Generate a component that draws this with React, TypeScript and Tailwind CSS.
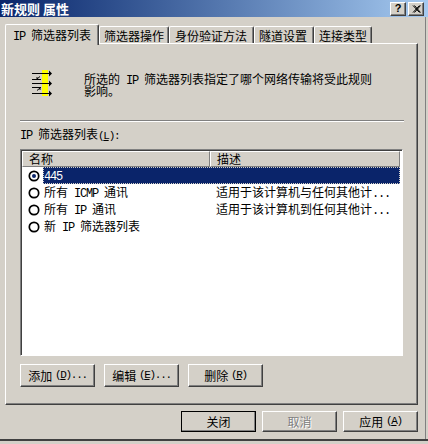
const cjk = "font-['Noto_Sans_CJK_SC',sans-serif] text-[12px] leading-[13px] text-black";
const asc = "font-['Liberation_Mono',monospace] text-[12px] tracking-[-1.2px]";
const small = "font-['Liberation_Mono',monospace] text-[11px] tracking-[-1.3px]";

function A({ children }: { children: string }) {
  return <span className={`${asc} whitespace-pre`}>{children}</span>;
}

function Key({ k, dots, label }: { k: string; dots?: boolean; label?: boolean }) {
  return (
    <span className={`${small} whitespace-pre`}>
      {"("}
      <span className="underline">{k}</span>
      {")"}
      {dots ? "..." : ""}
      {label ? ":" : ""}
    </span>
  );
}

function Tab({ children, active, w }: { children: React.ReactNode; active?: boolean; w: string }) {
  return active ? (
    <div className={`${w} h-[21px] border-t border-l border-white border-r border-r-[#404040] rounded-t-[2px] pl-[7px] pt-[3px] whitespace-nowrap shadow-[inset_-1px_0_0_#808080] bg-[#d4d0c8] z-10 -mb-px`}>
      {children}
    </div>
  ) : (
    <div className={`${w} h-[18px] mt-[2px] border-t border-l border-white border-r border-r-[#404040] rounded-t-[2px] pl-[4px] pt-[2px] whitespace-nowrap shadow-[inset_-1px_0_0_#808080]`}>
      {children}
    </div>
  );
}

function Btn({ children, w, h, def, off }: { children: React.ReactNode; w: string; h: string; def?: boolean; off?: boolean }) {
  return (
    <div className={`${w} ${h} ${def ? "outline outline-1 outline-black -outline-offset-1" : ""} border border-t-white border-l-white border-r-[#404040] border-b-[#404040] shadow-[inset_-1px_-1px_0_#808080] flex items-center justify-center whitespace-pre ${off ? "text-[#808080] [text-shadow:1px_1px_0_#fff]" : ""}`}>
      {children}
    </div>
  );
}

function Radio({ on }: { on?: boolean }) {
  return (
    <svg width="12" height="12" viewBox="0 0 12 12" className="shrink-0">
      <circle cx="6" cy="6" r="4.7" fill="#fff" stroke="#000" strokeWidth="1.7" />
      {on && <circle cx="6" cy="6" r="2" fill="#0a246a" />}
    </svg>
  );
}

function Row({ name, desc, on }: { name: React.ReactNode; desc?: React.ReactNode; on?: boolean }) {
  return (
    <div className="flex h-[17px] items-center">
      <div className="w-[21px] flex pl-[6px]"><Radio on={on} /></div>
      {on ? (
        <div className="flex-1 h-[17px] bg-[#0a246a] text-white border border-dotted border-[#d4d0c8] leading-[14px]">{name}</div>
      ) : (
        <>
          <div className="w-[173px] pl-[1px] whitespace-pre">{name}</div>
          <div className="flex-1 whitespace-pre">{desc}</div>
        </>
      )}
    </div>
  );
}

function Icon() {
  return (
    <svg width="26" height="28" viewBox="0 0 26 28">
      <rect x="10" y="0" width="6" height="26" fill="#ffff00" />
      <g stroke="#000" fill="none">
        <path d="M0 3.5H17M0 13.5H17M0 23.5H17M0 9.5H9M0 17.5H9" />
        <path d="M8 6.5L5 9M5 7V9.5H8M5 20.5L8 18M8 20V17.5H5" strokeWidth="1" />
      </g>
      <path d="M17 0.5L20 3.5L17 6.5ZM17 10.5L20 13.5L17 16.5ZM17 20.5L20 23.5L17 26.5Z" fill="#000" />
    </svg>
  );
}

export default function App() {
  return (
    <div className={`w-[428px] h-[444px] bg-[#d4d0c8] overflow-hidden flex flex-col ${cjk}`}>
      <div className="h-[17px] shrink-0 bg-gradient-to-r from-[#0a246a] to-[#a6caf0] flex items-center justify-between">
        <span className="text-white font-bold text-[13px] pl-px whitespace-pre">新规则 属性</span>
        <div className="flex gap-[2px] pr-[4px]">
          <div className="w-[16px] h-[14px] bg-[#d4d0c8] border border-t-white border-l-white border-r-[#404040] border-b-[#404040] shadow-[inset_-1px_-1px_0_#808080] flex items-center justify-center font-['Liberation_Sans',sans-serif] font-bold text-[11px]">?</div>
          <div className="w-[16px] h-[14px] bg-[#d4d0c8] border border-t-white border-l-white border-r-[#404040] border-b-[#404040] shadow-[inset_-1px_-1px_0_#808080] flex items-center justify-center">
            <svg width="9" height="8" viewBox="0 0 9 8"><path d="M1 0.5L7.5 7.5M2.5 0.5L8.5 7.5M7.5 0.5L1 7.5M8.5 0.5L2.5 7.5" stroke="#000" fill="none" /></svg>
          </div>
        </div>
      </div>

      <div className="flex-1 min-h-0 w-[426px] border-r border-[#808080] flex flex-col">
        <div className="pl-[5px] pt-[7px] flex h-[26px] shrink-0 items-start">
          <Tab active w="w-[94px]"><A>IP </A>筛选器列表</Tab>
          <Tab w="w-[70px]">筛选器操作</Tab>
          <Tab w="w-[85px]"><span className="pl-[1px]">身份验证方法</span></Tab>
          <Tab w="w-[60px]">隧道设置</Tab>
          <Tab w="w-[58px]">连接类型</Tab>
        </div>

        <div className="ml-[5px] w-[413px] h-[362px] shrink-0 border border-t-white border-l-white border-r-[#404040] border-b-[#404040] shadow-[inset_-1px_-1px_0_#808080] px-[14px] flex flex-col">
          <div className="flex h-[77px] pt-[27px] shrink-0">
            <div className="w-[64px] pl-[12px] shrink-0 -mt-[1px]"><Icon /></div>
            <div className="whitespace-pre pt-px">
              <div className="h-[12px] leading-[13px]">所选的<A> IP </A>筛选器列表指定了哪个网络传输将受此规则</div>
              <div className="h-[13px] leading-[13px]">影响。</div>
            </div>
          </div>
          <div className="h-px w-[384px] shrink-0 bg-[#808080] shadow-[0_1px_0_#fff] -mt-[1px]" />
          <div className="mt-[6px] h-[22px] shrink-0 whitespace-pre"><A>IP </A>筛选器列表<Key k="L" label /></div>
          <div className="w-[383px] h-[207px] shrink-0 border border-t-[#808080] border-l-[#808080] border-r-white border-b-white bg-white shadow-[inset_1px_1px_0_#404040]">
            <div className="flex h-[16px] ml-px mt-px w-[378px] bg-[#d4d0c8]">
              <div className="w-[188px] border border-t-white border-l-white border-r-[#808080] border-b-[#808080] pl-[6px] leading-[14px]">名称</div>
              <div className="flex-1 border border-t-white border-l-white border-r-[#808080] border-b-[#808080] pl-[6px] leading-[14px]">描述</div>
            </div>
            <div className="pl-px w-[379px]">
              <Row on name={<A>445</A>} />
              <Row name={<>所有<A> ICMP </A>通讯</>} desc={<>适用于该计算机与任何其他计<A>...</A></>} />
              <Row name={<>所有<A> IP </A>通讯</>} desc={<>适用于该计算机到任何其他计<A>...</A></>} />
              <Row name={<>新<A> IP </A>筛选器列表</>} />
            </div>
          </div>
          <div className="flex gap-[9px] mt-[8px]">
            <Btn w="w-[75px]" h="h-[23px]">添加 <Key k="D" dots /></Btn>
            <Btn w="w-[75px]" h="h-[23px]">编辑 <Key k="E" dots /></Btn>
            <Btn w="w-[75px]" h="h-[23px]">删除 <Key k="R" /></Btn>
          </div>
        </div>

        <div className="flex gap-[6px] pl-[181px] mt-[6px] shrink-0">
          <Btn def w="w-[75px]" h="h-[21px]">关闭</Btn>
          <Btn off w="w-[75px]" h="h-[21px]">取消</Btn>
          <Btn w="w-[75px]" h="h-[21px]">应用 <Key k="A" /></Btn>
        </div>
        <div className="h-[7px] shrink-0" />
      </div>

      <div className="h-[2px] bg-[#404040] shrink-0 mb-[3px]" />
    </div>
  );
}
